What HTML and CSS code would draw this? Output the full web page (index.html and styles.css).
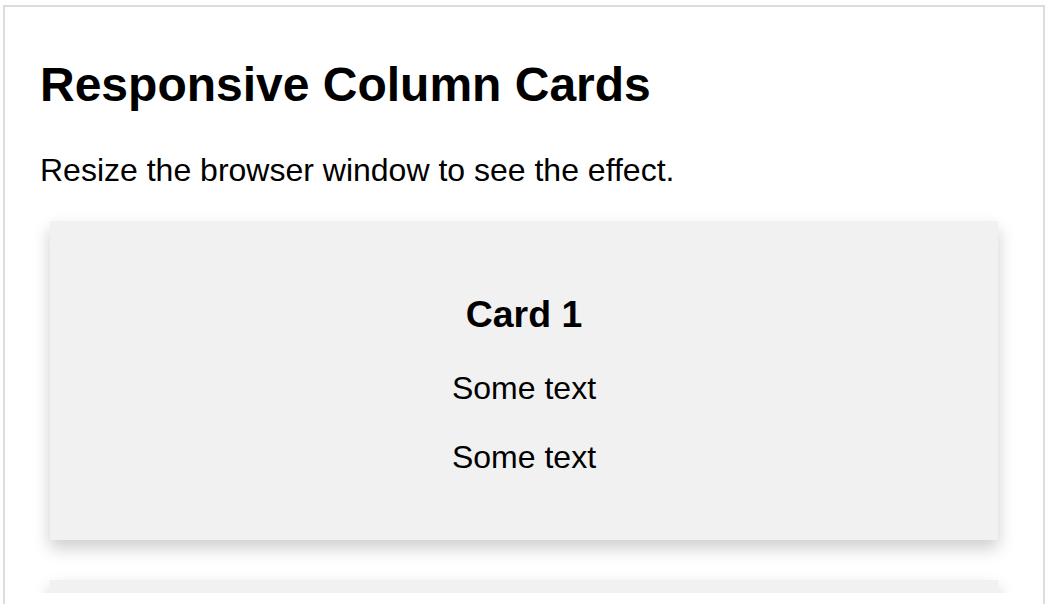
FILE: index.html
```
<!DOCTYPE html>
<html lang="en">
<head>
    <meta charset="UTF-8">
    <meta name="viewport" content="width=device-width, initial-scale=1.0">
    <title>Responsive Column Cards</title>
    <link rel="stylesheet" href="styles.css">
</head>
<body>
    <div class="frame">
        <div class="viewport">
            <div class="page">
                <h1>Responsive Column Cards</h1>
                <p class="intro">Resize the browser window to see the effect.</p>

                <div class="row">
                    <div class="column">
                        <div class="card">
                            <h3>Card 1</h3>
                            <p>Some text</p>
                            <p>Some text</p>
                        </div>
                    </div>
                    <div class="column">
                        <div class="card">
                            <h3>Card 2</h3>
                            <p>Some text</p>
                            <p>Some text</p>
                        </div>
                    </div>
                </div>
            </div>
        </div>
    </div>
</body>
</html>
```
FILE: styles.css
```
* {
    box-sizing: border-box;
}
body {
    font-family: "Liberation Sans", Arial, Helvetica, sans-serif;
    background-color: white;
    color: black;
    margin: 0;
    padding: 0;
    overflow: hidden;
}
.frame {
    margin: 5px 3px 0 3px;
    height: 640px;
    border: 2px solid #dcdcdc;
    border-bottom: none;
}
.viewport {
    height: 586px;
    overflow: hidden;
}
.page {
    padding: 18px 35px 0 35px;
    font-size: 32px;
}
h1 {
    font-size: 48px;
    line-height: 56px;
    margin: 32px 0 0;
}
.intro {
    line-height: 37px;
    margin: 39px 0 32px;
}
.row {
    margin: 0 -10px;
}
.column {
    padding: 0 20px;
    margin-bottom: 40px;
}
.card {
    padding: 32px;
    text-align: center;
    background-color: #f1f1f1;
    box-shadow: 0 8px 16px 0 rgba(0, 0, 0, 0.2);
}
.card h3 {
    font-size: 37.44px;
    line-height: 43px;
    margin: 40px 0 34px;
}
.card p {
    line-height: 37px;
    margin: 32px 0;
}
```
